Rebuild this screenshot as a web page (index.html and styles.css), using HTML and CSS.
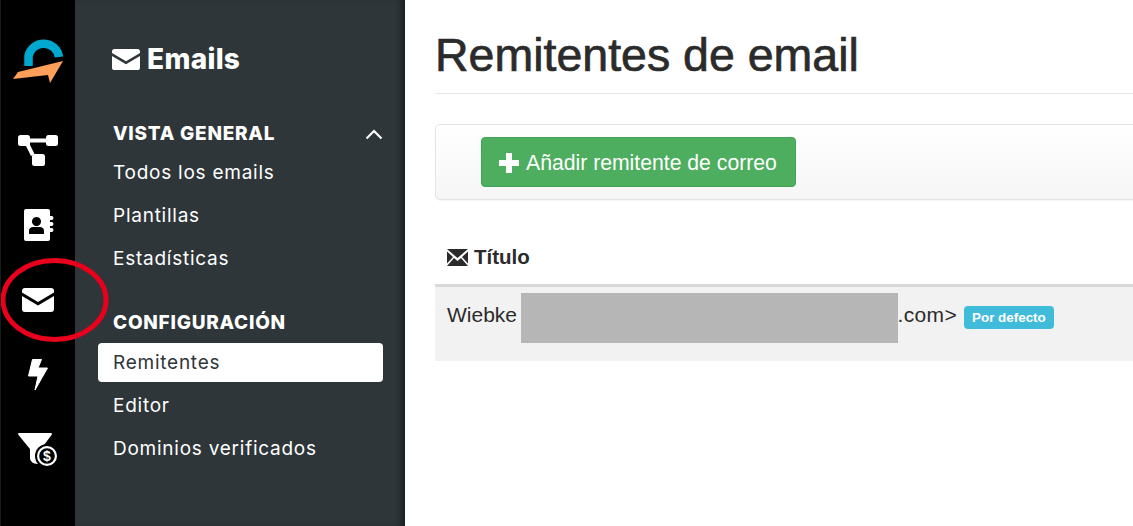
FILE: index.html
```html
<!DOCTYPE html>
<html lang="es">
<head>
<meta charset="utf-8">
<title>Remitentes de email</title>
<link rel="stylesheet" href="styles.css">
</head>
<body>
<div class="app">
  <nav class="rail">
    <a class="rail-item logo"><svg width="52" height="52" viewBox="0 0 52 52"><path d="M16.500 32V22A15.500 15.500 0 0 1 47 23" fill="none" stroke="#00a7cf" stroke-width="8.500"/><path d="M1 45 6 38 51 27 38 49 36 41Z" fill="#ff9f59"/></svg></a>
    <a class="rail-item"><svg width="40" height="31" viewBox="0 0 40 31"><g fill="#fff"><rect x="0" y="0" width="12" height="11" rx="2.500"/><rect x="28" y="0" width="12" height="11" rx="2.500"/><rect x="14" y="19" width="13" height="12" rx="2.500"/><rect x="11" y="3.500" width="18" height="4"/><path d="M7 9l3.500-2 6 12-3.500 2z"/></g></svg></a>
    <a class="rail-item"><svg width="32" height="33" viewBox="0 0 32 33"><path fill="#fff" fill-rule="evenodd" d="M4 0h22a2 2 0 0 1 2 2v5h1.500a1 1 0 0 1 0 4H28v2h1.500a1 1 0 0 1 0 4H28v2h1.500a1 1 0 0 1 0 4H28v7a2 2 0 0 1-2 2H4a2 2 0 0 1-2-2V2a2 2 0 0 1 2-2zM14.500 8a4.500 4.500 0 1 0 .01 0zM7 25h15v-3c0-3-2-4-4-4h-7c-2 0-4 1-4 4z"/></svg></a>
    <a class="rail-item"><svg width="32" height="24" viewBox="0 0 32 24"><path fill="#fff" d="M3 0h26a3 3 0 0 1 3 3v1.500L16 14 0 4.500V3a3 3 0 0 1 3-3zM0 8l16 9.500L32 8v13a3 3 0 0 1-3 3H3a3 3 0 0 1-3-3z"/></svg></a>
    <a class="rail-item"><svg width="20" height="32" viewBox="0 0 20 32"><path fill="#fff" stroke="#fff" stroke-width="1" stroke-linejoin="round" d="M4.500 .5H13.500L10 9H19.500L7 31 10 17H.5Z"/></svg></a>
    <a class="rail-item"><svg width="40" height="34" viewBox="0 0 40 34"><path fill="#fff" d="M1 0h32a1 1 0 0 1 .7 1.700L23 16v12a3 3 0 0 1-3 3c-5 0-8-3-8-6V16L.3 1.700A1 1 0 0 1 1 0z"/><circle cx="29" cy="23" r="12" fill="#000"/><circle cx="29" cy="23" r="10" fill="#fff"/><circle cx="29" cy="23" r="7.800" fill="#000"/><text x="29" y="28" class="dollar" text-anchor="middle">$</text></svg></a>
  </nav>
  <aside class="sidebar">
    <h2 class="side-title"><svg width="28" height="21" viewBox="0 0 32 24"><path fill="#fff" d="M3 0h26a3 3 0 0 1 3 3v1.500L16 14 0 4.500V3a3 3 0 0 1 3-3zM0 8l16 9.500L32 8v13a3 3 0 0 1-3 3H3a3 3 0 0 1-3-3z"/></svg>Emails</h2>
    <div class="group-head first"><span>VISTA GENERAL</span><svg width="18" height="11" viewBox="0 0 18 11"><path d="M1.500 9.500 9 2l7.500 7.500" fill="none" stroke="#fff" stroke-width="2.200"/></svg></div>
    <ul class="menu menu-first">
      <li>Todos los emails</li>
      <li>Plantillas</li>
      <li>Estadísticas</li>
    </ul>
    <div class="group-head second"><span>CONFIGURACIÓN</span></div>
    <ul class="menu">
      <li class="active">Remitentes</li>
      <li>Editor</li>
      <li>Dominios verificados</li>
    </ul>
  </aside>
  <main class="main">
    <h1 class="page-title">Remitentes de email</h1>
    <div class="toolbar">
      <button class="btn-add"><svg width="20" height="20" viewBox="0 0 20 20"><path fill="#fff" d="M7 0h6v7h7v6h-7v7H7v-7H0V7h7z"/></svg>Añadir remitente de correo</button>
    </div>
    <div class="table-head"><svg width="21" height="17" viewBox="0 0 21 17"><path fill="#2b2b2b" d="M0 0h21L10.500 9zM0 2.500 6 8l-6 6.500zM21 2.500 15 8l6 6.500zM7 9l3.500 3L14 9l7 8H0z"/></svg>Título</div>
    <div class="table-row">
      <span>Wiebke</span><span class="redact"></span><span class="domain">.com&gt;</span><span class="badge">Por defecto</span>
    </div>
  </main>
</div>
<svg class="ring" width="108" height="86" viewBox="0 0 108 86"><ellipse cx="53.500" cy="43" rx="51.500" ry="39.500" fill="none" stroke="#e8001c" stroke-width="5"/></svg>
</body>
</html>
```
FILE: styles.css
```css
* { box-sizing: border-box; }
html, body { margin: 0; height: 100%; overflow: hidden; background: #fff; }
.app { display: flex; width: 1133px; height: 526px; overflow: hidden; font-family: "Liberation Sans", Arial, sans-serif; color: #2b2b2b; }

.rail { flex: 0 0 75px; background: #000; display: flex; flex-direction: column; align-items: center; padding-top: 34px; padding-right: 1px; border-left: 1px solid #151a1d; }
.rail-item { display: flex; align-items: center; justify-content: center; height: 75px; width: 60px; flex: none; }
.rail-item.logo { height: 78.500px; align-items: flex-start; }
.dollar { font: 700 14px "Liberation Sans", sans-serif; fill: #fff; }

.sidebar { flex: 0 0 330px; background: #2e363a; color: #fff; padding: 0 22px 0 23px; box-shadow: inset -7px 0 6px -4px #161b1e; font-family: "Inter", sans-serif; }
.side-title { display: flex; align-items: center; gap: 7px; margin: 42px 0 0 14px; font-size: 28px; line-height: 34px; font-weight: 800; letter-spacing: .3px; }
.group-head { display: flex; justify-content: space-between; align-items: center; margin-left: 15px; font-size: 19px; font-weight: 800; line-height: 24px; letter-spacing: .75px; }
.group-head.first { margin-top: 46px; }
.group-head.second { margin-top: 33px; }
.menu { list-style: none; margin: 8px 0 0; padding: 0; }
.menu.menu-first { margin-top: 7px; }
.menu li { height: 39px; margin-bottom: 4px; padding: 0 15px; display: flex; align-items: center; font-size: 19px; border-radius: 4px; letter-spacing: .75px; }
.menu li.active { background: #fff; color: #2e363a; }

.main { flex: 1 0 0; padding-left: 30px; min-width: 0; margin-right: -20px; }
.page-title { margin: 0; height: 94px; padding-top: 30px; border-bottom: 1px solid #e8e8e8; font-size: 46.500px; line-height: 50px; font-weight: 500; color: #2b2b2b; -webkit-text-stroke: .7px #2b2b2b; }
.toolbar { margin-top: 30px; height: 76px; background: linear-gradient(#fff, #f6f6f6); border: 1px solid #e3e3e3; border-radius: 5px; padding: 12px 0 0 45px; box-shadow: 0 1px 1px rgba(0,0,0,.04); }
.btn-add { display: flex; align-items: center; gap: 7px; height: 50px; width: 315px; padding: 2px 0 0 17px; background: #4cae5e; border: 1px solid #44a455; border-radius: 4px; color: #fff; font: 21.200px "Liberation Sans", Arial, sans-serif; }
.table-head { display: flex; align-items: center; gap: 6px; height: 87px; padding: 30px 0 0 12px; font-size: 20.500px; font-weight: 700; border-bottom: 3px solid #d8d8d8; }
.table-row { display: flex; align-items: flex-start; height: 74px; padding: 6px 0 0 12px; background: #f2f2f2; font-size: 21px; color: #2b2b2b; }
.table-row > span:first-child, .table-row > .domain { line-height: 44px; }
.domain { letter-spacing: .35px; }
.redact { width: 377px; height: 50px; margin: 0 0 0 3.500px; background: #b6b6b6; }
.badge { margin: 13px 0 0 7px; height: 23px; padding: 0 8px; background: #41bbda; color: #fff; border-radius: 4px; font-size: 13.400px; font-weight: 700; line-height: 23px; }

.ring { position: absolute; left: 1px; top: 257px; }
```
